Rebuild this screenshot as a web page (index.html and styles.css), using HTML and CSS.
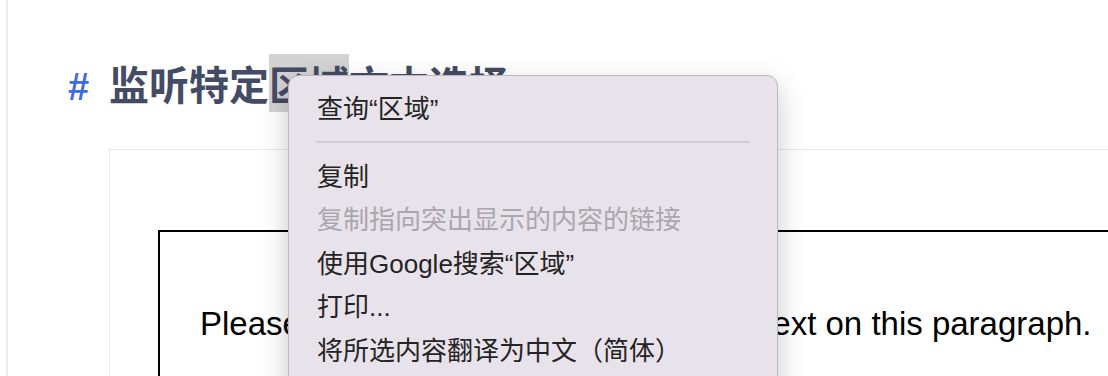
FILE: index.html
```html
<!DOCTYPE html>
<html lang="zh-CN">
<head>
<meta charset="utf-8">
<title>监听特定区域文本选择</title>
<link rel="stylesheet" href="styles.css">
</head>
<body>
<div class="page">
  <h1 class="title"><span class="anchor">#</span>监听特定<span class="sel">区域</span>文本选择</h1>
  <div class="demo">
    <div class="area">
      <p class="para">Please select any part of the following text on this paragraph.</p>
    </div>
  </div>
</div>
<div class="menu">
  <div class="item">查询“区域”</div>
  <div class="sep"></div>
  <div class="item">复制</div>
  <div class="item disabled">复制指向突出显示的内容的链接</div>
  <div class="item">使用Google搜索“区域”</div>
  <div class="item">打印...</div>
  <div class="item">将所选内容翻译为中文（简体）</div>
</div>
</body>
</html>
```
FILE: styles.css
```css
html, body {
  margin: 0;
  padding: 0;
  background: #ffffff;
  overflow: hidden;
  height: 376px;
}
body {
  font-family: "Liberation Sans", "Noto Sans CJK SC", sans-serif;
}
.page {
  margin-left: 6px;
  border-left: 2px solid #ececef;
  padding-left: 60px;
  padding-top: 59px;
  height: 400px;
}
.title {
  margin: 0;
  font-family: "Noto Sans CJK SC", sans-serif;
  font-size: 40px;
  font-weight: 700;
  line-height: 48px;
  color: #444b64;
  white-space: nowrap;
}
.anchor {
  display: inline-block;
  width: 41px;
  color: #3e6be0;
  font-family: "Liberation Sans", "Noto Sans CJK SC", sans-serif;
  font-size: 38px;
  font-weight: 700;
}
.sel {
  background: #d3d3d3;
}
.demo {
  margin-top: 38px;
  margin-left: 41px;
  width: 1200px;
  border: 1px solid #e7e7ec;
  padding: 80px 0 0 48px;
}
.area {
  border: 2px solid #000;
  padding: 40px;
  width: 1100px;
}
.para {
  margin: 32px 0;
  font-size: 33px;
  line-height: 40px;
  color: #000;
  white-space: nowrap;
}
.menu {
  position: absolute;
  left: 288px;
  top: 75px;
  width: 490px;
  height: 330px;
  box-sizing: border-box;
  background: #e8e2ea;
  border: 1px solid #bdb8bf;
  border-radius: 11px;
  box-shadow: 0 10px 28px rgba(0, 0, 0, 0.22);
  padding: 12px 0;
  font-family: "Liberation Sans", "Noto Sans CJK SC", sans-serif;
  font-size: 26px;
  color: #242424;
}
.item {
  padding: 0 28px;
  height: 43.5px;
  line-height: 43px;
  white-space: nowrap;
}
.item.disabled {
  color: #aba6ad;
}
.sep {
  height: 2px;
  margin: 9px 27px 13px 27px;
  background: #d2ccd4;
}
```
